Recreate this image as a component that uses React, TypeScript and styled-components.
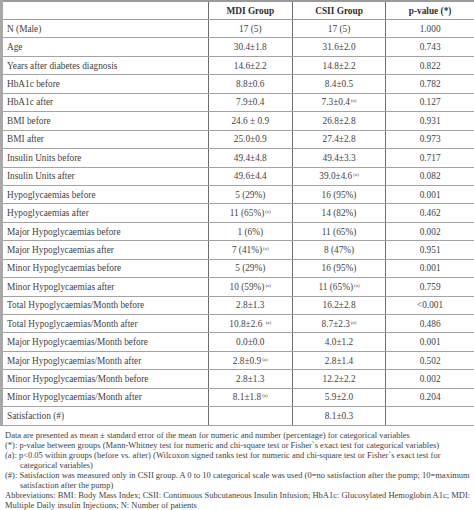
import styled, { createGlobalStyle } from "styled-components";

const GlobalStyle = createGlobalStyle`
  html, body {
    margin: 0;
    padding: 0;
    background: #ffffff;
  }
  body {
    font-family: "Liberation Serif", "Times New Roman", serif;
    color: #3f3f3f;
  }
`;

type Row = [string, string, string, string];

const rows: Row[] = [
  ["N (Male)", "17 (5)", "17 (5)", "1.000"],
  ["Age", "30.4±1.8", "31.6±2.0", "0.743"],
  ["Years after diabetes diagnosis", "14.6±2.2", "14.8±2.2", "0.822"],
  ["HbA1c before", "8.8±0.6", "8.4±0.5", "0.782"],
  ["HbA1c after", "7.9±0.4", "7.3±0.4^", "0.127"],
  ["BMI before", "24.6 ± 0.9", "26.8±2.8", "0.931"],
  ["BMI after", "25.0±0.9", "27.4±2.8", "0.973"],
  ["Insulin Units before", "49.4±4.8", "49.4±3.3", "0.717"],
  ["Insulin Units after", "49.6±4.4", "39.0±4.6^", "0.082"],
  ["Hypoglycaemias before", "5 (29%)", "16 (95%)", "0.001"],
  ["Hypoglycaemias after", "11 (65%)^", "14 (82%)", "0.462"],
  ["Major Hypoglycaemias before", "1 (6%)", "11 (65%)", "0.002"],
  ["Major Hypoglycaemias after", "7 (41%)^", "8 (47%)", "0.951"],
  ["Minor Hypoglycaemias before", "5 (29%)", "16 (95%)", "0.001"],
  ["Minor Hypoglycaemias after", "10 (59%)^", "11 (65%)^", "0.759"],
  ["Total Hypoglycaemias/Month before", "2.8±1.3", "16.2±2.8", "<0.001"],
  ["Total Hypoglycaemias/Month after", "10.8±2.6 ^", "8.7±2.3^", "0.486"],
  ["Major Hypoglycaemias/Month before", "0.0±0.0", "4.0±1.2", "0.001"],
  ["Major Hypoglycaemias/Month after", "2.8±0.9^", "2.8±1.4", "0.502"],
  ["Minor Hypoglycaemias/Month before", "2.8±1.3", "12.2±2.2", "0.002"],
  ["Minor Hypoglycaemias/Month after", "8.1±1.8^", "5.9±2.0", "0.204"],
  ["Satisfaction (#)", "", "8.1±0.3", ""],
];

const notes: { mark?: string; text: string }[] = [
  {
    text: "Data are presented as mean ± standard error of the mean for numeric and number (percentage) for categorical variables",
  },
  {
    mark: "(*):",
    text: "p-value between groups (Mann-Whitney test for numeric and chi-square test or Fisher`s exact test for categorical variables)",
  },
  {
    mark: "(a):",
    text: "p<0.05 within groups (before vs. after) (Wilcoxon signed ranks test for numeric and chi-square test or Fisher`s exact test for categorical variables)",
  },
  {
    mark: "(#):",
    text: "Satisfaction was measured only in CSII group. A 0 to 10 categorical scale was used (0=no satisfaction after the pump; 10=maximum satisfaction after the pump)",
  },
  {
    text: "Abbreviations: BMI: Body Mass Index; CSII: Continuous Subcutaneous Insulin Infusion; HbA1c: Glucosylated Hemoglobin A1c; MDI: Multiple Daily insulin Injections; N: Number of patients",
  },
];

const Page = styled.div`
  width: 474px;
  height: 510px;
  overflow: hidden;
`;

const Table = styled.table`
  width: 474px;
  border-collapse: collapse;
  table-layout: fixed;
  border-left: 3px solid #a8a8a8;
  border-top: 2px solid #9a9a9a;
  font-size: 9.3px;
`;

const HeadCell = styled.th`
  height: 17px;
  padding: 0;
  font-weight: bold;
  text-align: center;
  color: #2e2e2e;
  border-left: 1px solid #6e6e6e;
  border-bottom: 1px solid #9a9a9a;
  &:first-child {
    border-left: none;
  }
`;

const Cell = styled.td<{ $label?: boolean }>`
  height: 17.45px;
  padding: 0 0 0 ${({ $label }) => ($label ? "4px" : "0")};
  text-align: ${({ $label }) => ($label ? "left" : "center")};
  white-space: nowrap;
  border-left: ${({ $label }) => ($label ? "none" : "1px solid #6e6e6e")};
  border-bottom: 1px solid #a4a4a4;
`;

const Mark = styled.sup`
  font-size: 5px;
  vertical-align: 3px;
  margin-left: 1px;
`;

const Notes = styled.div`
  padding: 4px 2px 0 5px;
  font-size: 8.5px;
  line-height: 10px;
`;

const Note = styled.div<{ $hang: boolean }>`
  padding-left: ${({ $hang }) => ($hang ? "15px" : "0")};
  text-indent: ${({ $hang }) => ($hang ? "-15px" : "0")};
`;

function Value({ text }: { text: string }) {
  if (!text.includes("^")) return <>{text}</>;
  return (
    <>
      {text.replace("^", "")}
      <Mark>(a)</Mark>
    </>
  );
}

export default function App() {
  return (
    <Page>
      <GlobalStyle />
      <Table>
        <colgroup>
          <col style={{ width: 206 }} />
          <col style={{ width: 84 }} />
          <col style={{ width: 93 }} />
          <col style={{ width: 88 }} />
        </colgroup>
        <thead>
          <tr>
            <HeadCell></HeadCell>
            <HeadCell>MDI Group</HeadCell>
            <HeadCell>CSII Group</HeadCell>
            <HeadCell>p-value (*)</HeadCell>
          </tr>
        </thead>
        <tbody>
          {rows.map((r, i) => (
            <tr key={i}>
              <Cell $label>{r[0]}</Cell>
              <Cell>
                <Value text={r[1]} />
              </Cell>
              <Cell>
                <Value text={r[2]} />
              </Cell>
              <Cell>{r[3]}</Cell>
            </tr>
          ))}
        </tbody>
      </Table>
      <Notes>
        {notes.map((n, i) => (
          <Note key={i} $hang={!!n.mark}>
            {n.mark ? `${n.mark} ` : ""}
            {n.text}
          </Note>
        ))}
      </Notes>
    </Page>
  );
}
